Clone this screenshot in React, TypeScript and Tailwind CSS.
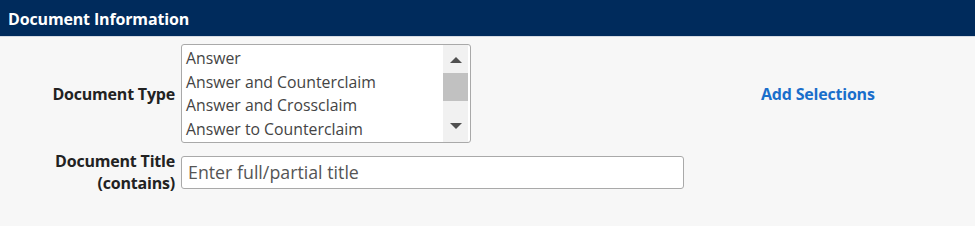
import React from "react";

const docTypes = [
  "Answer",
  "Answer and Counterclaim",
  "Answer and Crossclaim",
  "Answer to Counterclaim",
];

export default function App() {
  return (
    <div className="h-[226px] w-[975px] bg-[#f7f7f7] font-['Open_Sans',sans-serif] text-[#333]">
      <div className="flex h-[37px] items-center border-b border-[#d6dbe3] bg-[#002b5c] px-2 pt-[2px]">
        <h2 className="text-[16px] font-bold tracking-[-0.15px] text-white">Document Information</h2>
      </div>

      <div className="flex items-center pt-[7px]">
        <label className="w-[176px] pr-[1px] text-right text-[16px] font-bold tracking-[-0.2px] text-[#222]">
          Document Type
        </label>
        <div className="ml-[5px] flex h-[99px] w-[290px] overflow-hidden rounded-[3px] border border-[#a9a9a9] bg-white">
          <ul className="flex-1 pl-[4px] pt-[2px]">
            {docTypes.map((t) => (
              <li key={t} className="h-[23.5px] text-[15.8px] leading-[23.5px] text-[#444]">
                {t}
              </li>
            ))}
          </ul>
          <div className="mr-[2px] flex w-[25px] flex-col items-center bg-[#f1f1f1]">
            <svg width="12" height="8" viewBox="0 0 12 8" className="mt-[11px]">
              <path d="M0 7 L6 1 L12 7 Z" fill="#505050" />
            </svg>
            <div className="mt-[9px] h-[28px] w-full bg-[#c1c1c1]" />
            <div className="flex-1" />
            <svg width="12" height="8" viewBox="0 0 12 8" className="mb-[12px]">
              <path d="M0 1 L6 7 L12 1 Z" fill="#505050" />
            </svg>
          </div>
        </div>
        <a className="ml-[290px] cursor-pointer text-[16px] font-bold tracking-[-0.2px] text-[#1a6ecb]">Add Selections</a>
      </div>

      <div className="mt-[7px] flex items-center">
        <label className="w-[176px] pr-[1px] text-right text-[16px] font-bold leading-[22px] tracking-[-0.2px] text-[#222]">
          Document Title
          <br />
          (contains)
        </label>
        <input
          type="text"
          placeholder="Enter full/partial title"
          className="ml-[5px] h-[33px] w-[503px] rounded-[3px] border border-[#a9a9a9] bg-white px-[6px] text-[17.8px] text-[#333] outline-none placeholder:text-[#555]"
        />
      </div>
    </div>
  );
}
